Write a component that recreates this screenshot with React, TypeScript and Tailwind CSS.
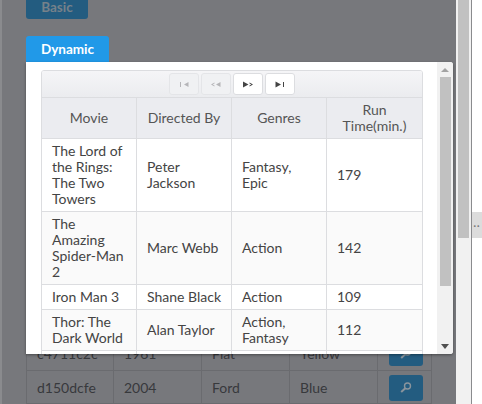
const movies = [
  { title: "The Lord of the Rings: The Two Towers", by: "Peter Jackson", genres: "Fantasy, Epic", time: "179", h: "h-[73px]" },
  { title: "The Amazing Spider-Man 2", by: "Marc Webb", genres: "Action", time: "142", h: "h-[73px]" },
  { title: "Iron Man 3", by: "Shane Black", genres: "Action", time: "109", h: "h-[25px]" },
  { title: "Thor: The Dark World", by: "Alan Taylor", genres: "Action, Fantasy", time: "112", h: "h-[41px]" },
  { title: "", by: "", genres: "", time: "", h: "h-[25px]" },
];

const cars = [
  { id: "c4711c2c", year: "1961", make: "Fiat", color: "Yellow", pad: "pb-[2px]" },
  { id: "d150dcfe", year: "2004", make: "Ford", color: "Blue", pad: "pt-[1px]" },
];

function SearchIcon() {
  return (
    <svg width="12" height="11" viewBox="0 0 12 11" fill="none" stroke="#8a949c">
      <circle cx="7.5" cy="4" r="3" strokeWidth="1.4" />
      <path d="M5.300 6.200 1.200 10" strokeWidth="2" />
    </svg>
  );
}

function PageBtn({ icon, off }: { icon: string; off?: boolean }) {
  return (
    <div
      className={`flex h-[22px] w-[30px] items-center justify-center rounded-[3px] border text-[#444] ${
        off ? "border-[#e4e5e8] bg-[#f0f1f3] text-[#b5b5b8]" : "border-[#dcdde0] bg-white"
      }`}
    >
      <svg width="12" height="7" viewBox="0 0 12 7" fill="currentColor">
        {icon === "first" && <path d="M2 1h1v5H2zM6 3.500 10.500 1v5z" />}
        {icon === "prev" && <path d="M4.500 1.500 1 3.500l3.500 2v-.9L2.700 3.500l1.800-1.100zM6 3.500 10.500 1v5z" />}
        {icon === "next" && <path d="M1 .5l5.500 3-5.500 3zM7.500 1.500l3.500 2-3.500 2v-.9l1.800-1.100-1.800-1.100z" />}
        {icon === "last" && <path d="M1.500 .5 7 3.500l-5.500 3zM9 1h1v5H9z" />}
      </svg>
    </div>
  );
}

export default function App() {
  return (
    <div className="relative flex h-[404px] w-[482px] overflow-hidden bg-white font-['Lato',sans-serif] text-[14px]">
      <div className="relative h-full w-[456px] shrink-0 border-l-2 border-[#8a8b8e] bg-[#77787c]">
        <div className="ml-[24px] flex h-[19px] w-[62px] items-end justify-center rounded-b-[3px] bg-[#235c80] pb-[5px] text-[13.5px] leading-none font-bold text-[#76818a]">
          Basic
        </div>

        <div className="mt-[17px] ml-[24px] flex h-[26px] w-[83px] items-center justify-center rounded-t-[3px] bg-[#2199e8] text-[13.5px] font-bold text-white">
          Dynamic
        </div>

        {/* table behind the overlay */}
        <div className="mt-[276px] ml-[24px] w-[406px] text-[#37393c]">
          {cars.map((c) => (
            <div key={c.id} className="flex h-[33px] border-b border-[#6a6b6f]">
              <div className={`flex w-[88px] items-center border-x border-[#6a6b6f] pl-[10px] ${c.pad}`}>{c.id}</div>
              <div className={`flex w-[88px] items-center border-r border-[#6a6b6f] pl-[10px] ${c.pad}`}>{c.year}</div>
              <div className={`flex w-[88px] items-center border-r border-[#6a6b6f] pl-[10px] ${c.pad}`}>{c.make}</div>
              <div className={`flex w-[88px] items-center border-r border-[#6a6b6f] pl-[10px] ${c.pad}`}>{c.color}</div>
              <div className={`flex w-[54px] items-center justify-center border-r border-[#6a6b6f] pl-[2px] ${c.pad}`}>
                <div className="flex h-[26px] w-[34px] items-center justify-center rounded-[3px] bg-[#235c80]">
                  <SearchIcon />
                </div>
              </div>
            </div>
          ))}
        </div>

        {/* dialog */}
        <div className="absolute top-[62px] left-[24px] h-[292px] w-[427px] overflow-hidden rounded-r-[3px] bg-white shadow-[0_1px_3px_rgba(0,0,0,0.4)]">
          <div className="mt-[8px] ml-[15px] h-[290px] w-[382px] overflow-hidden rounded-t-[3px] border border-[#dcdde0] text-[#444]">
            <div className="flex h-[27px] items-center justify-center gap-[2px] border-b border-[#dcdde0] bg-gradient-to-b from-[#f5f5f7] to-[#ebecef]">
              <PageBtn icon="first" off />
              <PageBtn icon="prev" off />
              <PageBtn icon="next" />
              <PageBtn icon="last" />
            </div>
            <div className="flex h-[41px] border-b border-[#dcdde0] bg-[#ebecf0] text-center leading-[16px] text-[#555]">
              <div className="flex w-[95px] items-center justify-center border-r border-[#dcdde0]">Movie</div>
              <div className="flex w-[95px] items-center justify-center border-r border-[#dcdde0]">Directed By</div>
              <div className="flex w-[95px] items-center justify-center border-r border-[#dcdde0]">Genres</div>
              <div className="flex flex-1 items-center justify-center px-[4px]">Run Time(min.)</div>
            </div>
            {movies.map((m, i) => (
              <div key={i} className={`flex ${m.h} border-b border-[#dcdde0] leading-[16px] ${i % 2 ? "bg-[#fafafa]" : "bg-white"}`}>
                <div className="flex w-[95px] items-center border-r border-[#dcdde0] px-[10px]">{m.title}</div>
                <div className="flex w-[95px] items-center border-r border-[#dcdde0] px-[10px]">{m.by}</div>
                <div className="flex w-[95px] items-center border-r border-[#dcdde0] px-[10px]">{m.genres}</div>
                <div className="flex flex-1 items-center px-[10px]">{m.time}</div>
              </div>
            ))}
          </div>
          {/* inner scrollbar */}
          <div className="absolute top-0 right-0 flex h-full w-[16px] flex-col items-center bg-[#f1f1f1]">
            <div className="mt-[6px] h-0 w-0 border-x-[4px] border-b-[4px] border-x-transparent border-b-[#a3a3a3]" />
            <div className="mt-[5px] h-[209px] w-[11px] bg-[#c1c1c1]" />
            <div className="mt-auto mb-[5px] h-0 w-0 border-x-[4px] border-t-[5px] border-x-transparent border-t-[#505050]" />
          </div>
        </div>
      </div>

      {/* outer scrollbar */}
      <div className="h-full w-[15px] shrink-0 bg-[#f1f1f1] pl-[2px]">
        <div className="h-[238px] w-[11px] bg-[#c1c1c1]" />
      </div>
      <div className="h-full w-[1px] bg-[#8a8b8e]" />
      <div className="flex-1 bg-white">
        <div className="mt-[212px] flex h-[26px] w-[10px] items-center justify-center bg-[#dcdcdc] text-[9px] leading-none font-bold tracking-[1px] text-[#777]">
          ··
        </div>
      </div>
    </div>
  );
}
